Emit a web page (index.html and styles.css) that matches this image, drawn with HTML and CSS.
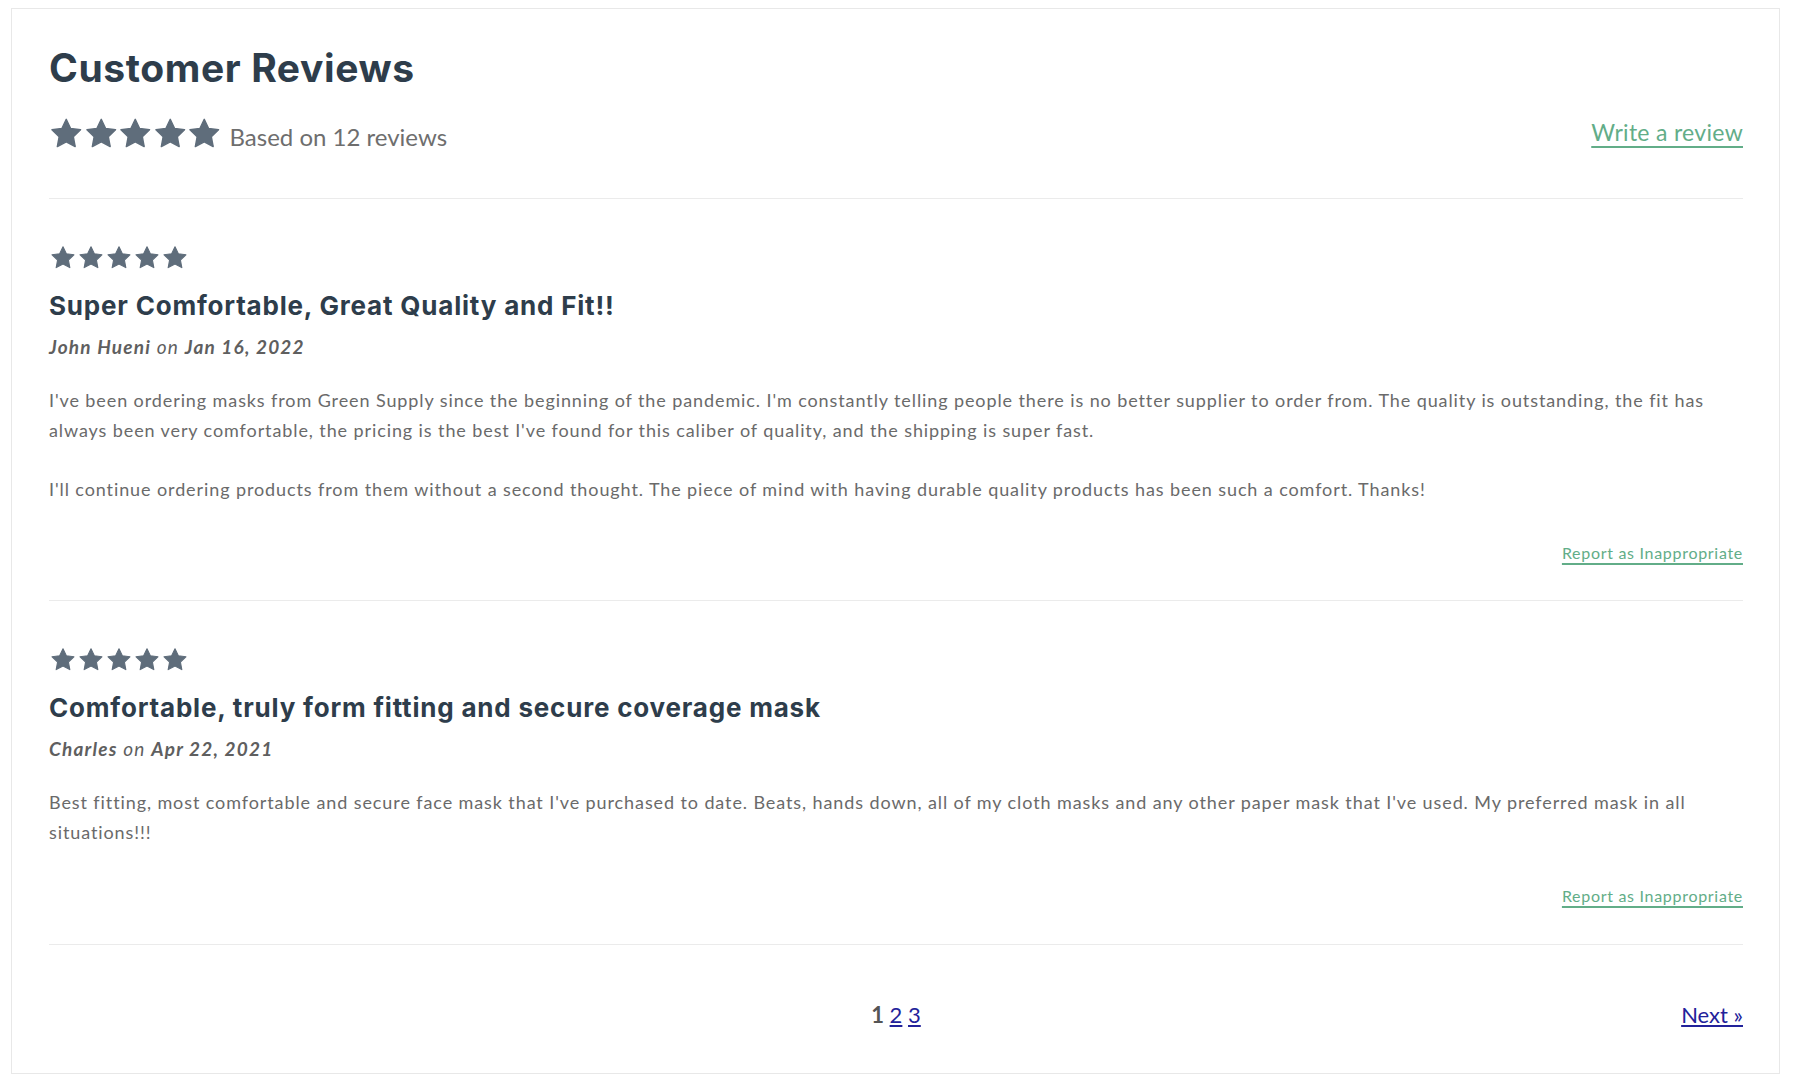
FILE: index.html
```html
<!DOCTYPE html>
<html lang="en">
<head>
    <meta charset="UTF-8">
    <meta name="viewport" content="width=device-width, initial-scale=1.0">
    <title>Customer Reviews</title>
    <link rel="stylesheet" href="styles.css">
</head>
<body>
    <svg class="sprite" xmlns="http://www.w3.org/2000/svg">
        <symbol id="star" viewBox="0 0 24 24">
            <path d="M12 1.6l3.1 6.5 7 .9-5.1 4.9 1.3 7L12 17.5l-6.3 3.4 1.3-7L1.9 9l7-.9z" stroke-linejoin="round" stroke-width="1" stroke="currentColor"/>
        </symbol>
    </svg>

    <div class="container">
        <div class="header">
            <h2>Customer Reviews</h2>
            <div class="summary">
                <div class="summary-rating">
                    <span class="stars stars-lg">
                        <svg class="star"><use href="#star"/></svg>
                        <svg class="star"><use href="#star"/></svg>
                        <svg class="star"><use href="#star"/></svg>
                        <svg class="star"><use href="#star"/></svg>
                        <svg class="star"><use href="#star"/></svg>
                    </span>
                    <span class="summary-text">Based on 12 reviews</span>
                </div>
                <a href="#" class="write-link">Write a review</a>
            </div>
        </div>

        <div class="review">
            <span class="stars">
                <svg class="star"><use href="#star"/></svg>
                <svg class="star"><use href="#star"/></svg>
                <svg class="star"><use href="#star"/></svg>
                <svg class="star"><use href="#star"/></svg>
                <svg class="star"><use href="#star"/></svg>
            </span>
            <h3 class="review-title">Super Comfortable, Great Quality and Fit!!</h3>
            <div class="review-meta"><strong>John Hueni</strong> on <strong>Jan 16, 2022</strong></div>
            <div class="review-body">
                <p>I've been ordering masks from Green Supply since the beginning of the pandemic. I'm constantly telling people there is no better supplier to order from. The quality is outstanding, the fit has always been very comfortable, the pricing is the best I've found for this caliber of quality, and the shipping is super fast.</p>
                <p>I'll continue ordering products from them without a second thought. The piece of mind with having durable quality products has been such a comfort. Thanks!</p>
            </div>
            <div class="review-footer">
                <a href="#" class="report-link">Report as Inappropriate</a>
            </div>
        </div>

        <div class="review">
            <span class="stars">
                <svg class="star"><use href="#star"/></svg>
                <svg class="star"><use href="#star"/></svg>
                <svg class="star"><use href="#star"/></svg>
                <svg class="star"><use href="#star"/></svg>
                <svg class="star"><use href="#star"/></svg>
            </span>
            <h3 class="review-title">Comfortable, truly form fitting and secure coverage mask</h3>
            <div class="review-meta"><strong>Charles</strong> on <strong>Apr 22, 2021</strong></div>
            <div class="review-body">
                <p>Best fitting, most comfortable and secure face mask that I've purchased to date. Beats, hands down, all of my cloth masks and any other paper mask that I've used. My preferred mask in all situations!!!</p>
            </div>
            <div class="review-footer">
                <a href="#" class="report-link">Report as Inappropriate</a>
            </div>
        </div>

        <div class="pagination">
            <span></span>
            <span class="pages"><span class="current">1</span> <a href="#">2</a> <a href="#">3</a></span>
            <a href="#" class="next">Next &raquo;</a>
        </div>
    </div>
</body>
</html>
```

FILE: styles.css
```css
* {
    margin: 0;
    padding: 0;
    box-sizing: border-box;
}

body {
    background: #fff;
    padding: 8px 13px 12px 11px;
    font-family: Lato, 'Liberation Sans', sans-serif;
    color: #6a6a6a;
}

.sprite {
    display: none;
}

.container {
    border: 1px solid #e8e8e8;
    padding: 36px 36px 44px 37px;
}

.header {
    border-bottom: 1px solid #ebebeb;
    padding-bottom: 47px;
}

.header h2 {
    font-family: Inter, 'Noto Sans', sans-serif;
    font-weight: 700;
    font-size: 39px;
    line-height: 46px;
    color: #2e3d4b;
    letter-spacing: 0.6px;
}

.summary {
    display: flex;
    justify-content: space-between;
    align-items: center;
    margin-top: 26px;
    height: 34px;
}

.summary-rating {
    display: flex;
    align-items: flex-end;
}

.stars {
    display: flex;
    color: #5f6d7b;
}

.star {
    width: 28px;
    height: 26px;
    fill: currentColor;
}

.stars-lg .star {
    width: 34.5px;
    height: 34px;
}

.summary-text {
    font-size: 24px;
    line-height: 24px;
    letter-spacing: 0;
    margin-left: 8px;
    margin-bottom: 2px;
    color: #6e6e6e;
}

.write-link {
    font-size: 23px;
    line-height: 24px;
    letter-spacing: 0.3px;
    color: #62ad88;
    text-decoration: underline;
    text-decoration-thickness: 2px;
    text-underline-offset: 5px;
    margin-bottom: 4px;
}

.review {
    border-bottom: 1px solid #ebebeb;
    padding: 46px 0 37px;
}

.review + .review {
    padding-bottom: 38px;
}

.review-title {
    font-family: Inter, 'Noto Sans', sans-serif;
    font-weight: 700;
    font-size: 26px;
    line-height: 30px;
    color: #2e3d4b;
    letter-spacing: 0.8px;
    margin-top: 20px;
}

.review-meta {
    font-style: italic;
    font-size: 19px;
    line-height: 24px;
    letter-spacing: 1.2px;
    color: #5f5f5f;
    margin-top: 14px;
}

.review-meta strong {
    font-weight: 700;
}

.review-body {
    margin-top: 26px;
    font-size: 18px;
    line-height: 30px;
    letter-spacing: 0.9px;
}

.review-body p + p {
    margin-top: 29px;
}

.review-footer {
    display: flex;
    justify-content: flex-end;
    margin-top: 39px;
}

.review + .review .review-footer {
    margin-top: 39px;
}

.report-link {
    font-size: 16px;
    line-height: 20px;
    letter-spacing: 0.7px;
    color: #62ad88;
    text-decoration: underline;
    text-decoration-thickness: 2px;
    text-underline-offset: 4px;
}

.pagination {
    display: grid;
    grid-template-columns: 1fr auto 1fr;
    align-items: baseline;
    padding-top: 56px;
    font-size: 22px;
    line-height: 28px;
}

.pagination a {
    color: #22229a;
}

.pages .current {
    font-weight: 700;
    color: #555;
}

.next {
    justify-self: end;
}
```
